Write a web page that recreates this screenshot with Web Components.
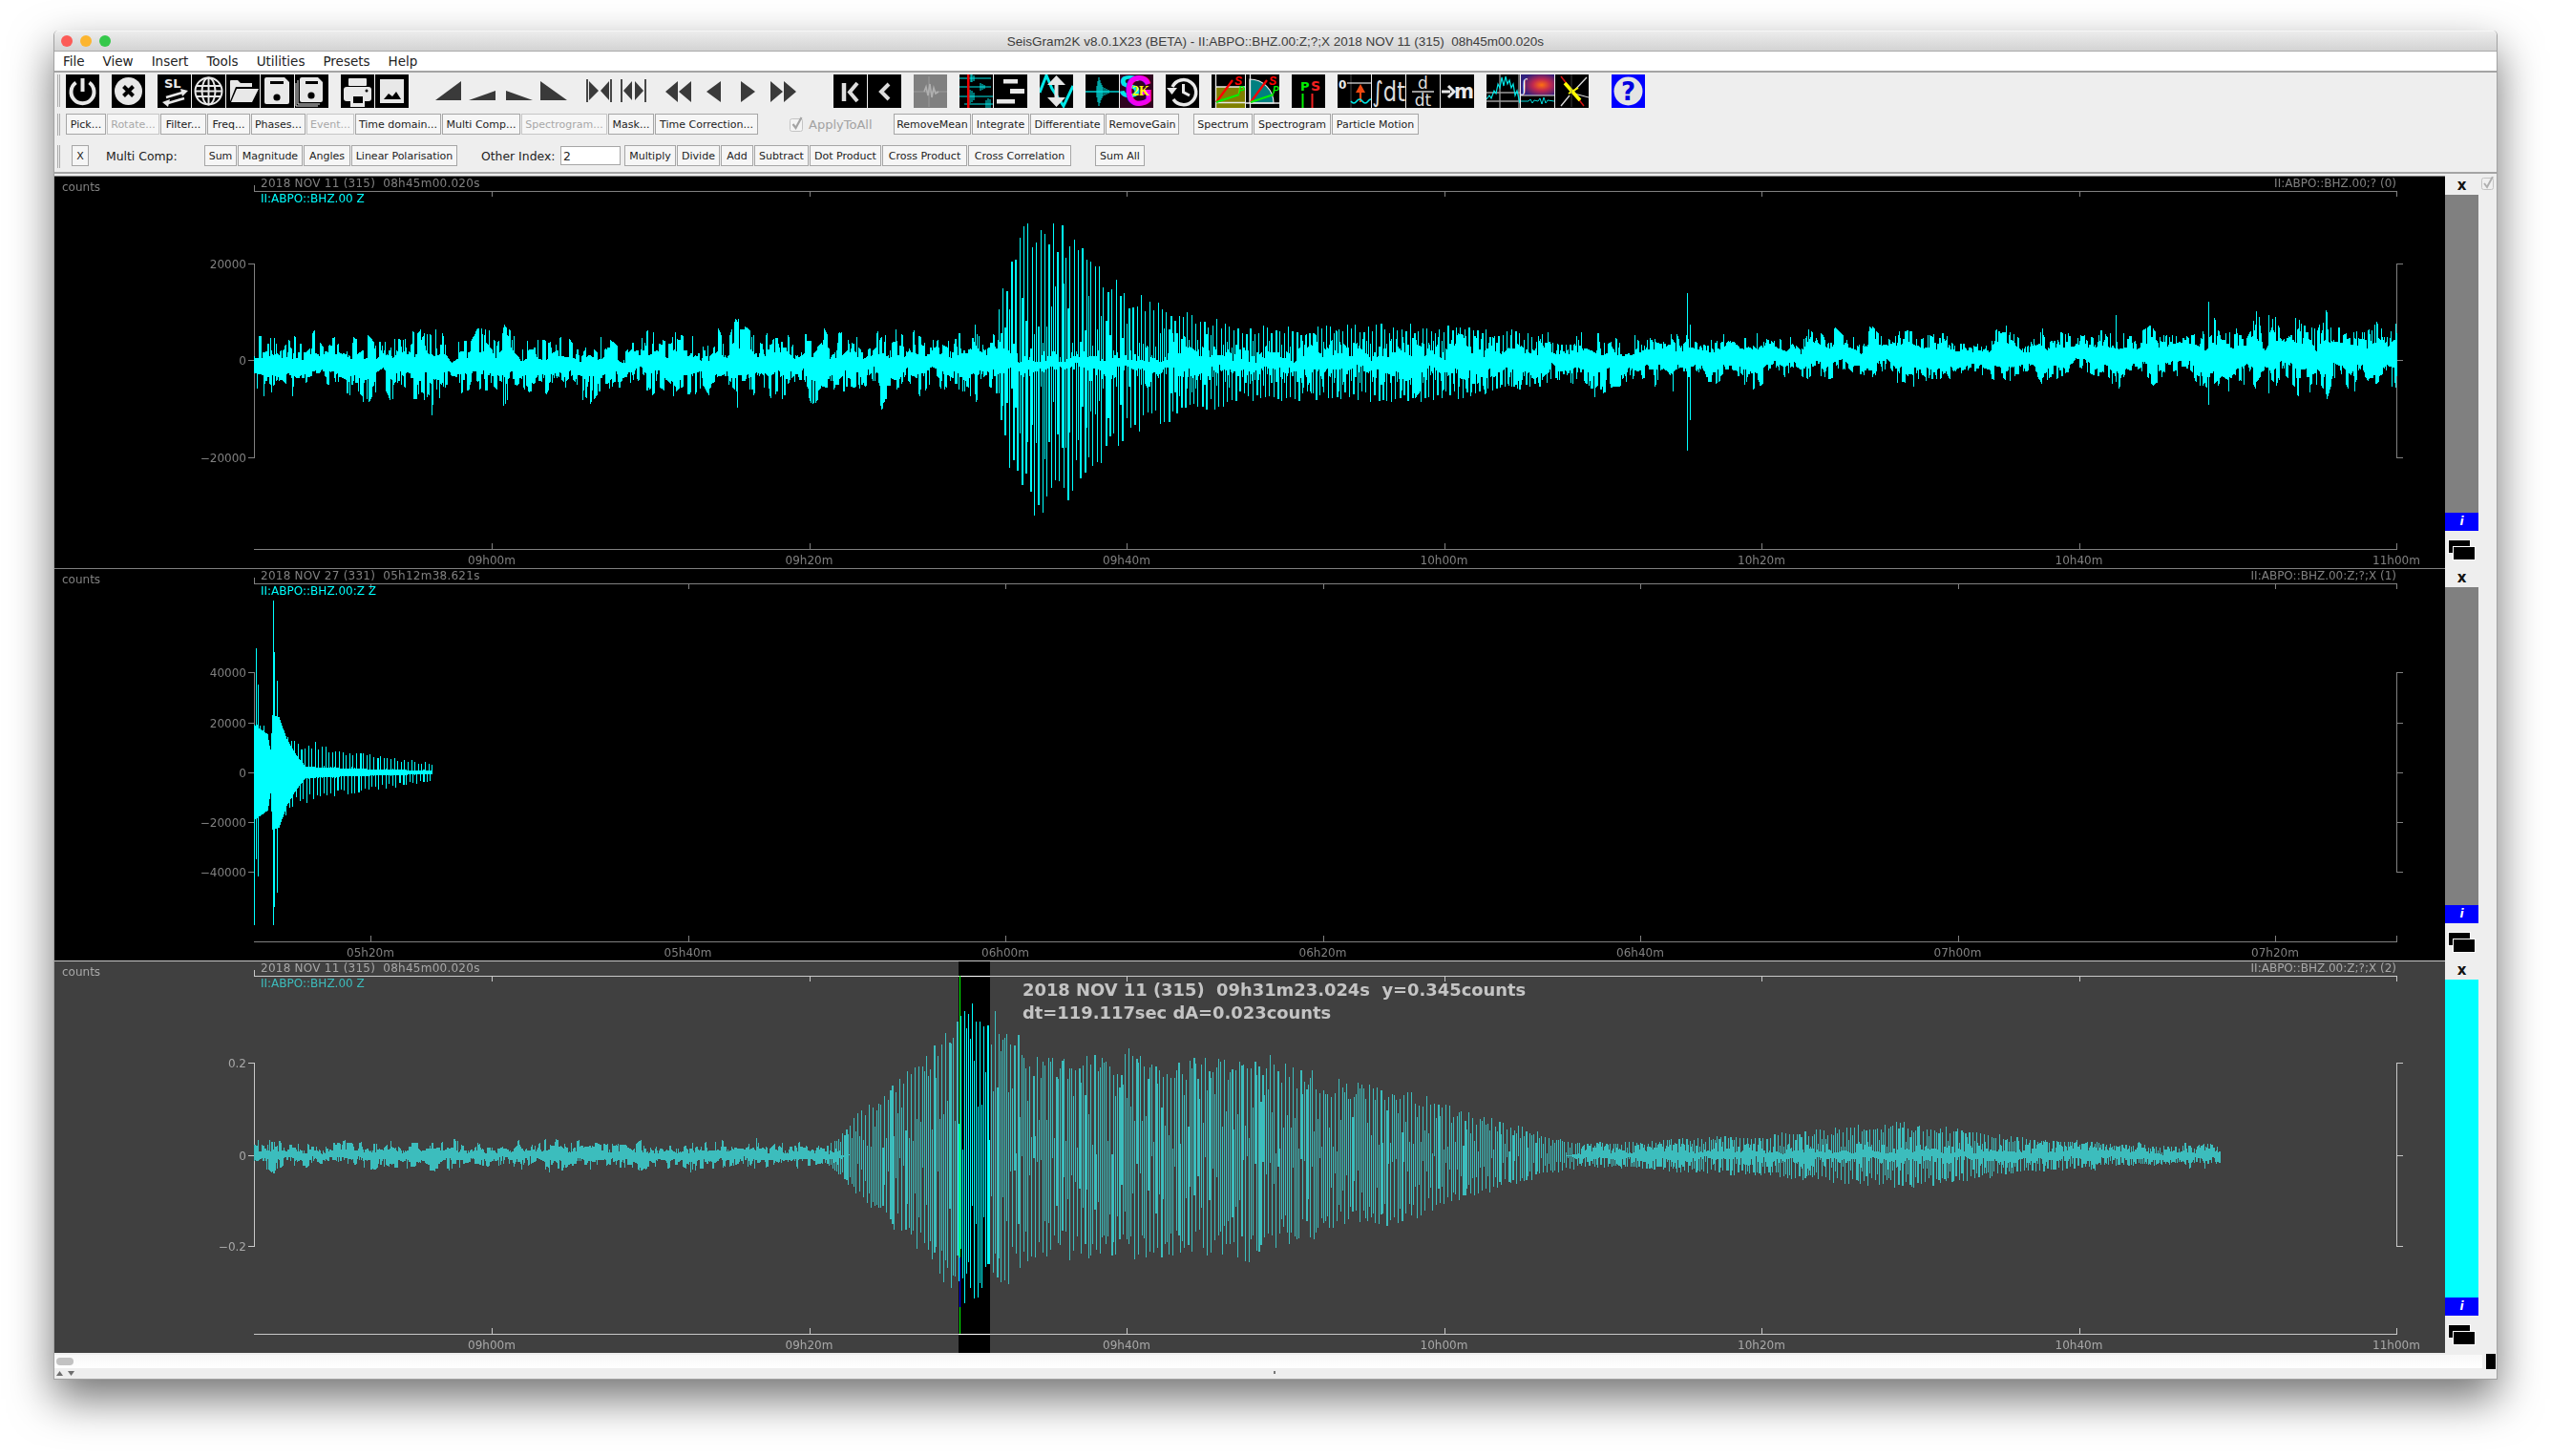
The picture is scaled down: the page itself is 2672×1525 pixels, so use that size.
<!DOCTYPE html>
<html>
<head>
<meta charset="utf-8">
<title>SeisGram2K</title>
<style>
html, body { margin: 0; height: 100%; background: #fff; overflow: hidden; }
body { font-family: "DejaVu Sans", sans-serif; }
sg-window { margin: 32px 0 0 56px; }
</style>
</head>
<body>
<sg-window>
  <sg-titlebar>SeisGram2K v8.0.1X23 (BETA) - II:ABPO::BHZ.00:Z;?;X 2018 NOV 11 (315)  08h45m00.020s</sg-titlebar>
  <sg-menubar><span>File</span><span>View</span><span>Insert</span><span>Tools</span><span>Utilities</span><span>Presets</span><span>Help</span></sg-menubar>

  <sg-row style="height:40px;padding-top:2px">
    <sg-icon name="power" ml="4"></sg-icon>
    <sg-icon name="close" ml="12"></sg-icon>
    <sg-icon name="sl" ml="12"></sg-icon>
    <sg-icon name="globe"></sg-icon>
    <sg-icon name="folder"></sg-icon>
    <sg-icon name="disk"></sg-icon>
    <sg-icon name="disks"></sg-icon>
    <sg-icon name="print" ml="12"></sg-icon>
    <sg-icon name="image"></sg-icon>
    <sg-icon name="tri1" w="28" clear ml="27"></sg-icon>
    <sg-icon name="tri2" w="28" clear ml="6"></sg-icon>
    <sg-icon name="tri3" w="28" clear ml="10"></sg-icon>
    <sg-icon name="tri4" w="28" clear ml="7"></sg-icon>
    <sg-icon name="skipin" w="27" clear ml="19"></sg-icon>
    <sg-icon name="skipout" w="27" clear ml="8"></sg-icon>
    <sg-icon name="dleft" w="27" clear ml="19"></sg-icon>
    <sg-icon name="left" w="15" clear ml="15"></sg-icon>
    <sg-icon name="right" w="15" clear ml="20"></sg-icon>
    <sg-icon name="dright" w="27" clear ml="15"></sg-icon>
    <sg-icon name="first" ml="38"></sg-icon>
    <sg-icon name="prev"></sg-icon>
    <sg-icon name="ghost" ml="12"></sg-icon>
    <sg-icon name="multi" ml="12"></sg-icon>
    <sg-icon name="sort"></sg-icon>
    <sg-icon name="flip" ml="12"></sg-icon>
    <sg-icon name="spike" ml="12"></sg-icon>
    <sg-icon name="sg2k"></sg-icon>
    <sg-icon name="clock" ml="12"></sg-icon>
    <sg-icon name="sp1" ml="12"></sg-icon>
    <sg-icon name="sp2"></sg-icon>
    <sg-icon name="ps" ml="12"></sg-icon>
    <sg-icon name="zero" ml="12"></sg-icon>
    <sg-icon name="intdt"></sg-icon>
    <sg-icon name="ddt"></sg-icon>
    <sg-icon name="tom"></sg-icon>
    <sg-icon name="trace" ml="12"></sg-icon>
    <sg-icon name="spectro"></sg-icon>
    <sg-icon name="motion"></sg-icon>
    <sg-icon name="help" ml="23"></sg-icon>
  </sg-row>

  <sg-row style="height:30px;padding-top:3px">
    <sg-btn w="42" ml="4">Pick...</sg-btn>
    <sg-btn w="55" disabled>Rotate...</sg-btn>
    <sg-btn w="48">Filter...</sg-btn>
    <sg-btn w="45">Freq...</sg-btn>
    <sg-btn w="57">Phases...</sg-btn>
    <sg-btn w="50" disabled>Event...</sg-btn>
    <sg-btn w="90">Time domain...</sg-btn>
    <sg-btn w="82">Multi Comp...</sg-btn>
    <sg-btn w="90" disabled>Spectrogram...</sg-btn>
    <sg-btn w="48">Mask...</sg-btn>
    <sg-btn w="108">Time Correction...</sg-btn>
    <sg-check></sg-check>
    <sg-btn w="81" ml="19">RemoveMean</sg-btn>
    <sg-btn w="60">Integrate</sg-btn>
    <sg-btn w="78">Differentiate</sg-btn>
    <sg-btn w="77">RemoveGain</sg-btn>
    <sg-btn w="62" ml="14">Spectrum</sg-btn>
    <sg-btn w="81">Spectrogram</sg-btn>
    <sg-btn w="91">Particle Motion</sg-btn>
  </sg-row>

  <sg-row style="height:34px;padding-top:6px">
    <sg-btn w="18" ml="10">X</sg-btn>
    <sg-label w="119" pad="17">Multi Comp:</sg-label>
    <sg-btn w="34">Sum</sg-btn>
    <sg-btn w="68">Magnitude</sg-btn>
    <sg-btn w="49">Angles</sg-btn>
    <sg-btn w="111">Linear Polarisation</sg-btn>
    <sg-label w="106" pad="24">Other Index:</sg-label>
    <sg-input value="2"></sg-input>
    <sg-btn w="54" ml="3">Multiply</sg-btn>
    <sg-btn w="45">Divide</sg-btn>
    <sg-btn w="34">Add</sg-btn>
    <sg-btn w="57">Subtract</sg-btn>
    <sg-btn w="75">Dot Product</sg-btn>
    <sg-btn w="89">Cross Product</sg-btn>
    <sg-btn w="108">Cross Correlation</sg-btn>
    <sg-btn w="52" ml="24">Sum All</sg-btn>
  </sg-row>
  <sg-rule></sg-rule>

  <sg-plots>
    <sg-plot trace="a" date="2018 NOV 11 (315)  08h45m00.020s" chan="II:ABPO::BHZ.00 Z" tag="II:ABPO::BHZ.00;? (0)"></sg-plot>
    <sg-plot trace="b" date="2018 NOV 27 (331)  05h12m38.621s" chan="II:ABPO::BHZ.00:Z Z" tag="II:ABPO::BHZ.00:Z;?;X (1)"></sg-plot>
    <sg-plot trace="c" date="2018 NOV 11 (315)  08h45m00.020s" chan="II:ABPO::BHZ.00 Z" tag="II:ABPO::BHZ.00:Z;?;X (2)"></sg-plot>
  </sg-plots>
  <sg-status></sg-status>
</sg-window>

<script>
// seeded so every run draws the same seismograms
function rng(seed) {
    return () => {
        seed = seed + 0x6D2B79F5 | 0
        let t = Math.imul(seed ^ seed >>> 15, 1 | seed)
        t = t + Math.imul(t ^ t >>> 7, 61 | t) ^ t
        return ((t ^ t >>> 14) >>> 0) / 4294967296
    }
}

function lerp(pts, x) {
    if (x <= pts[0][0]) return pts[0][1]
    for (let i = 1; i < pts.length; i++) {
        if (x <= pts[i][0]) {
            let f = (x - pts[i - 1][0]) / (pts[i][0] - pts[i - 1][0])
            return pts[i - 1][1] + f * (pts[i][1] - pts[i - 1][1])
        }
    }
    return pts[pts.length - 1][1]
}

const TIMES_A = ['09h00m', '09h20m', '09h40m', '10h00m', '10h20m', '10h40m', '11h00m']
const TIMES_B = ['05h20m', '05h40m', '06h00m', '06h20m', '06h40m', '07h00m', '07h20m']

const TRACES = {
    a: {
        top: 184, seed: 11, x0: 266, x1: 2510, period: 4.4, inner: .6, thick: .35, drift: 5, color: '#00ffff', side: '#808080',
        bg: '#000', fg: '#808080', textFg: '#808080', chanFg: '#00ffff',
        times: TIMES_A, tickStart: 515, yticks: [[92, '20000'], [193, '0'], [295, '\u221220000']],
        center: [[266, 383], [1500, 380], [1870, 374], [2510, 372]],
        noise: [[266, 38], [1000, 40], [1040, 30], [1100, 14], [1300, 26], [1500, 34], [1700, 38], [1780, 32], [2200, 32], [2320, 44], [2510, 44]],
        core: [[266, .24], [1760, .24], [1790, .36], [2510, .3]],
        amp: [[1035, 0], [1042, 35], [1050, 85], [1060, 120], [1080, 160], [1098, 172], [1130, 135], [1145, 115], [1180, 78], [1240, 58], [1300, 40], [1500, 42], [1600, 30], [1700, 0]],
        spikes: [[452, 375, 435], [1767, 307, 472], [1770, 340, 420], [2313, 316, 424], [2376, 330, 412], [1770, 340, 440], [2216, 330, 400]]
    },
    b: {
        top: 595, seed: 27, x0: 266, x1: 452, period: 3.6, inner: .25, thick: .1, drift: 0, color: '#00ffff', side: '#808080',
        bg: '#000', fg: '#808080', textFg: '#808080', chanFg: '#00ffff',
        times: TIMES_B, tickStart: 388, yticks: [[109, '40000'], [162, '20000'], [214, '0'], [266, '\u221220000'], [318, '\u221240000']],
        center: [[266, 809], [452, 809]],
        noise: [[266, 0]], core: [[266, 1]],
        amp: [[266, 52], [275, 55], [283, 30], [292, 62], [300, 50], [310, 32], [330, 32], [360, 24], [400, 18], [452, 10]],
        solid: [[266, 50], [280, 40], [283, 22], [285, 60], [292, 58], [300, 35], [310, 18], [320, 6], [340, 5], [400, 3], [452, 2]],
        spikes: [[266, 809, 969], [268, 679, 900], [270, 717, 918], [286, 629, 969], [287, 683, 950], [290, 713, 935]]
    },
    c: {
        top: 1006, seed: 315, x0: 266, x1: 2324, period: 4, inner: .95, thick: .15, drift: 2, color: '#3cbdbd', side: '#00ffff',
        bg: '#404040', fg: '#c8c8c8', textFg: '#a8a8a8', chanFg: '#3cbdbd',
        times: TIMES_A, tickStart: 515, yticks: [[107, '0.2'], [204, '0'], [299, '\u22120.2']],
        center: [[266, 1210], [2324, 1210]],
        noise: [[266, 17], [860, 17], [890, 0], [1640, 0], [1670, 14], [2324, 14]],
        core: [[266, .22]],
        amp: [[860, 6], [870, 14], [900, 47], [950, 92], [1000, 152], [1010, 170], [1037, 157], [1070, 122], [1085, 108], [1180, 113], [1260, 105], [1310, 113], [1345, 100], [1410, 78], [1465, 73], [1530, 48], [1600, 28], [1660, 12], [1700, 14], [1755, 18], [1875, 25], [1994, 36], [2130, 18], [2215, 12], [2324, 9]],
        spikes: [],
        band: [1004, 1037]
    }
}

window.customElements.define('sg-window', class extends HTMLElement {
    constructor() {
        super()
        this.attachShadow({ mode: 'open' }).innerHTML = `
        <style>
            :host {
                display: flex;
                flex-direction: column;
                box-sizing: border-box;
                width: 2560px;
                height: 1413px;
                background: #eeeeee;
                border: 1px solid #a2a2a2;
                border-top: 0;
                border-radius: 5px 5px 0 0;
                box-shadow: 0 20px 46px rgba(0,0,0,.55);
            }
        </style>
        <slot></slot>`
    }
})

window.customElements.define('sg-titlebar', class extends HTMLElement {
    constructor() {
        super()
        this.attachShadow({ mode: 'open' }).innerHTML = `
        <style>
            :host {
                display: flex;
                align-items: center;
                position: relative;
                box-sizing: border-box;
                height: 22px;
                justify-content: center;
                background: linear-gradient(#ececec, #d3d3d3);
                border-top: 1px solid #f6f6f6;
                border-bottom: 1px solid #aaaaaa;
                border-radius: 5px 5px 0 0;
                font: 13.5px "Liberation Sans", Arial, sans-serif;
                color: #3c3c3c;
                white-space: pre;
            }
            .lights { position: absolute; left: 7px; top: 4px; display: flex; gap: 8px; }
            .lights i { width: 12px; height: 12px; border-radius: 50%; }
        </style>
        <div class="lights">
            <i style="background:#fc5b57"></i><i style="background:#fcb52f"></i><i style="background:#34c84a"></i>
        </div>
        <slot></slot>`
    }
})

window.customElements.define('sg-menubar', class extends HTMLElement {
    constructor() {
        super()
        this.attachShadow({ mode: 'open' }).innerHTML = `
        <style>
            :host {
                display: flex;
                align-items: center;
                gap: 19px;
                box-sizing: border-box;
                height: 22px;
                padding-left: 9px;
                background: #fff;
                border-bottom: 2px solid #a4a4a4;
                font: 13.5px "DejaVu Sans", sans-serif;
                color: #222;
            }
        </style>
        <slot></slot>`
    }
})

window.customElements.define('sg-row', class extends HTMLElement {
    constructor() {
        super()
        this.attachShadow({ mode: 'open' }).innerHTML = `
        <style>
            :host {
                display: flex;
                align-items: flex-start;
                gap: 1px;
                box-sizing: border-box;
                padding-left: 3px;
                background: #eeeeee;
                flex: none;
            }
            .grip {
                width: 1px;
                height: calc(100% - 4px);
                margin-right: 1px;
                border-left: 1px solid #ababab;
                border-right: 1px solid #ababab;
            }
        </style>
        <div class="grip"></div>
        <slot></slot>`
    }
})

window.customElements.define('sg-rule', class extends HTMLElement {
    constructor() {
        super()
        this.attachShadow({ mode: 'open' }).innerHTML = `
        <style>
            :host { display: block; height: 4px; box-sizing: border-box; border-top: 2px solid #a4a4a4; background: #eee; }
        </style>`
    }
})

window.customElements.define('sg-btn', class extends HTMLElement {
    connectedCallback() {
        this.attachShadow({ mode: 'open' }).innerHTML = `
        <style>
            :host {
                display: flex;
                align-items: center;
                justify-content: center;
                flex: none;
                box-sizing: border-box;
                height: 22px;
                width: ${this.getAttribute('w')}px;
                margin-left: ${this.getAttribute('ml') || 0}px;
                background: #f6f6f6;
                border: 1px solid ${this.hasAttribute('disabled') ? '#c6c6c6' : '#a6a6a6'};
                font: 11px "DejaVu Sans", sans-serif;
                color: ${this.hasAttribute('disabled') ? '#a8a8a8' : '#222'};
                white-space: nowrap;
                overflow: hidden;
            }
        </style>
        <slot></slot>`
    }
})

window.customElements.define('sg-label', class extends HTMLElement {
    connectedCallback() {
        this.attachShadow({ mode: 'open' }).innerHTML = `
        <style>
            :host {
                display: flex;
                align-items: center;
                flex: none;
                box-sizing: border-box;
                height: 22px;
                width: ${this.getAttribute('w')}px;
                padding-left: ${this.getAttribute('pad') || 0}px;
                font: 12.4px "DejaVu Sans", sans-serif;
                color: #222;
                white-space: nowrap;
            }
        </style>
        <slot></slot>`
    }
})

window.customElements.define('sg-input', class extends HTMLElement {
    connectedCallback() {
        this.attachShadow({ mode: 'open' }).innerHTML = `
        <style>
            :host {
                display: flex;
                align-items: center;
                flex: none;
                box-sizing: border-box;
                height: 20px;
                width: 63px;
                margin-top: 1px;
                padding-left: 2px;
                background: #fff;
                border: 1px solid #a6a6a6;
                font: 12.4px "DejaVu Sans", sans-serif;
                color: #222;
            }
        </style>
        ${this.getAttribute('value')}`
    }
})

window.customElements.define('sg-check', class extends HTMLElement {
    constructor() {
        super()
        this.attachShadow({ mode: 'open' }).innerHTML = `
        <style>
            :host {
                display: flex;
                align-items: center;
                gap: 5px;
                flex: none;
                height: 22px;
                width: 89px;
                margin-left: 32px;
                font: 13px "DejaVu Sans", sans-serif;
                color: #a2a2a2;
                box-sizing: border-box;
                white-space: nowrap;
            }
            svg { flex: none; }
        </style>
        <svg width="15" height="17" viewBox="0 0 15 17">
            <rect x=".5" y="2.5" width="13" height="13" rx="2" fill="#f4f4f4" stroke="#c4c4c4"/>
            <path d="M3.5 8 L6.5 12 L12.5 1" fill="none" stroke="#a4a4a4" stroke-width="2.2"/>
        </svg>
        <span>ApplyToAll</span>`
    }
})

const E = '#e8e8e8'
const T = '#3a3a3a'
const ICONS = {
    power: `<path d="M10.5 8.5 A12 12 0 1 0 24.5 8.5" fill="none" stroke="${E}" stroke-width="4"/><path d="M17.5 4V18" stroke="${E}" stroke-width="4"/>`,
    close: `<circle cx="17.5" cy="17.5" r="14.5" fill="${E}"/><path d="M12.5 12.5L22.5 22.5M22.5 12.5L12.5 22.5" stroke="#000" stroke-width="4"/>`,
    sl: `<text x="7" y="14" font-family="DejaVu Sans" font-weight="bold" font-size="13" fill="${E}">SL</text>
         <path d="M9 24 L26 19" stroke="${E}" stroke-width="2.5"/><path d="M24 15 L32 17 L26 23Z" fill="${E}"/>
         <path d="M28 25 L11 30" stroke="${E}" stroke-width="2.5"/><path d="M13 26 L5 29 L11 34Z" fill="${E}"/>`,
    globe: `<g fill="none" stroke="${E}" stroke-width="2"><circle cx="17.5" cy="17.5" r="14"/><ellipse cx="17.5" cy="17.5" rx="7" ry="14"/><path d="M17.5 3.5V31.5M5 12H30M3.5 17.5H31.5M5 23H30"/></g>`,
    folder: `<path d="M4 28 V7 Q4 6 5 6 H12 L15 9 H27 V13 H10 Z" fill="${E}"/><path d="M11 15 H34 L27 29 H5 Z" fill="${E}"/>`,
    disk: `<path d="M6 3 H25 L30 8 V29 Q30 31 28 31 H6 Q4 31 4 29 V5 Q4 3 6 3Z" fill="${E}"/><rect x="10" y="7" width="14" height="3" fill="#000"/><circle cx="17" cy="24" r="3.6" fill="#000"/>`,
    disks: `<path d="M7 3 H24 L29 8 V27 Q29 29 27 29 H7 Q5 29 5 27 V5 Q5 3 7 3Z" fill="${E}"/><rect x="11" y="7" width="13" height="3" fill="#000"/><circle cx="17" cy="22" r="3.6" fill="#000"/>
            <path d="M3 6 V31 H26M1 9 V33 H24" fill="none" stroke="${E}" stroke-width="1"/>`,
    print: `<rect x="8" y="4" width="19" height="8" rx="1" fill="${E}"/><rect x="3" y="13" width="29" height="15" rx="3" fill="${E}"/><rect x="10" y="22" width="15" height="12" fill="${E}"/><rect x="13" y="23" width="10" height="7" fill="#000"/><circle cx="27" cy="17" r="1.5" fill="#000"/>`,
    image: `<rect x="5" y="5" width="25" height="25" fill="${E}"/><path d="M9 26 L14 20 L18 23 L22 18 L27 26Z" fill="#000"/>`,
    tri1: `<path d="M0 27 L27 7 V27Z" fill="${T}"/>`,
    tri2: `<path d="M0 27 L28 17 V27Z" fill="${T}"/>`,
    tri3: `<path d="M0 17 L28 27 H0Z" fill="${T}"/>`,
    tri4: `<path d="M0 7 L28 27 H0Z" fill="${T}"/>`,
    skipin: `<path d="M1 5V29M26 5V29" stroke="#111" stroke-width="1.5"/><path d="M3 7 L13 17 L3 27Z M24 7 L15 17 L24 27Z" fill="${T}"/>`,
    skipout: `<path d="M1 5V29M26 5V29" stroke="#111" stroke-width="1.5"/><path d="M12 7 L3 17 L12 27Z M15 7 L24 17 L15 27Z" fill="${T}"/>`,
    dleft: `<path d="M13 7 L0 18 L13 29Z M27 7 L14 18 L27 29Z" fill="${T}"/>`,
    left: `<path d="M15 7 L0 18 L15 29Z" fill="${T}"/>`,
    right: `<path d="M0 7 L15 18 L0 29Z" fill="${T}"/>`,
    dright: `<path d="M0 7 L13 18 L0 29Z M14 7 L27 18 L14 29Z" fill="${T}"/>`,
    first: `<path d="M11 9V28" stroke="#ddd" stroke-width="4.5"/><path d="M25 9 L17 18.5 L25 28" fill="none" stroke="#ddd" stroke-width="4"/>`,
    prev: `<path d="M22 10 L14 18 L22 26" fill="none" stroke="#ddd" stroke-width="4"/>`,
    ghost: `<rect width="35" height="35" fill="#808080"/><path d="M0 18H35M16 2V34" stroke="#9a9a9a" stroke-width="1"/><path d="M11 18 L13 13 L15 22 L17 10 L19 24 L21 14 L23 20 L26 18" fill="none" stroke="#b0b0b0" stroke-width="1.6"/>`,
    multi: `<g fill="none" stroke="#00e8e8"><path d="M0 4H33M0 13H33M0 23H35M5 31H35"/><path d="M12 0V8M13 0V8M15 1V7M22 9V17M24 10V16M26 11V15M11 16V30M13 17V29M15 19V27M30 25V35M32 26V35M28 27V35"/></g><rect x="8" width="2.5" height="35" fill="#f00000"/>`,
    sort: `<g fill="${E}"><rect x="10" y="5" width="15" height="4.5"/><rect x="17" y="15" width="15" height="5"/><rect x="3" y="26" width="19" height="4.5"/></g>`,
    flip: `<path d="M0 19 L7 1 L13 15 L25 33 L35 12" fill="none" stroke="#00e8e8" stroke-width="3"/><path d="M17.5 1 L27 11 H8Z M8 24 H27 L17.5 34Z" fill="#e4e4e4"/><rect x="15.5" y="11" width="4" height="13" fill="#e4e4e4"/>`,
    spike: `<path d="M0 18H35" stroke="#00d0d0" stroke-width="1.4"/><path d="M12 12V24M13 7V29M14 3V33M15 6V30M16 9V27M17 11V25M18 13V23M20 14V22M22 15V21M24 16V20" stroke="#00e0e0" stroke-width="1"/>`,
    sg2k: `<rect width="35" height="35" fill="#300420"/><text x="-1" y="24" font-family="Liberation Sans" font-weight="bold" font-size="34" fill="#00e8e8">S</text><text x="5" y="33" font-family="Liberation Sans" font-weight="bold" font-size="46" fill="#f000f0" textLength="30" lengthAdjust="spacingAndGlyphs">G</text><text x="13" y="22" font-family="Liberation Serif" font-weight="bold" font-size="14" fill="#ffff00">2K</text>`,
    clock: `<path d="M7 13 A13 13 0 1 1 8 26" fill="none" stroke="${E}" stroke-width="3.5"/><path d="M1 14 H12 L6.5 21Z" fill="${E}"/><path d="M18.5 10V18.5L25 22" fill="none" stroke="${E}" stroke-width="3"/>`,
    sp1: `<rect x="4" y="13" width="31" height="22" fill="#808000"/><path d="M4.5 0V35M4 13H35M4 29.5H35" stroke="#e8e8e8" stroke-width="1.3" fill="none"/><path d="M5 29 L22 6" stroke="#f00" stroke-width="2.2"/><path d="M5 29 L29 21" stroke="#00f000" stroke-width="2.2"/><text x="24" y="11" font-family="Liberation Sans" font-style="italic" font-weight="bold" font-size="12" fill="#f00">S</text><text x="28" y="20" font-family="Liberation Sans" font-style="italic" font-weight="bold" font-size="10" fill="#00f000">P</text>`,
    sp2: `<path d="M4 5 A25 25 0 0 1 29 30 H4Z" fill="#008080" stroke="#e8e8e8" stroke-width="1.2"/><path d="M4.5 0V35M0 30H35" stroke="#e8e8e8" stroke-width="1.3" fill="none"/><path d="M5 29 L22 6" stroke="#f00" stroke-width="2.2"/><path d="M5 29 L29 21" stroke="#00f000" stroke-width="2.2"/><text x="24" y="11" font-family="Liberation Sans" font-style="italic" font-weight="bold" font-size="12" fill="#f00">S</text><text x="28" y="20" font-family="Liberation Sans" font-style="italic" font-weight="bold" font-size="10" fill="#00f000">P</text>`,
    ps: `<text x="9" y="17" font-family="DejaVu Sans" font-weight="bold" font-size="13" fill="#00f000">P</text><text x="20" y="17" font-family="DejaVu Sans" font-weight="bold" font-size="14" fill="#f02020">S</text><rect x="10.5" y="20" width="2" height="15" fill="#00f000"/><rect x="20.5" y="20" width="2" height="15" fill="#f02020"/>`,
    zero: `<text x="1" y="15" font-family="DejaVu Sans" font-weight="bold" font-size="12" fill="${E}">0</text><path d="M14 0V35" stroke="#777" stroke-width=".6"/><path d="M10 9H35" stroke="${E}" stroke-width="1.2"/><path d="M24 29V17" stroke="#f04810" stroke-width="2.2"/><path d="M19 19 L24 10 L29 19Z" fill="#f04810"/><path d="M14 28 Q17 32 20 28 T26 28 T32 28 T36 28" fill="none" stroke="#00e8e8" stroke-width="1.5"/>`,
    intdt: `<text x="0" y="28" font-family="DejaVu Sans" font-size="29" fill="#ddd" textLength="35" lengthAdjust="spacingAndGlyphs">\u222Bdt</text>`,
    ddt: `<text x="17.5" y="15" text-anchor="middle" font-family="DejaVu Sans" font-size="17" fill="#ddd">d</text><path d="M6 18H29" stroke="#ddd" stroke-width="1.4"/><text x="17.5" y="33" text-anchor="middle" font-family="DejaVu Sans" font-size="17" fill="#ddd">dt</text>`,
    tom: `<path d="M1 18H10" stroke="${E}" stroke-width="3"/><path d="M8 12 L14 18 L8 24" fill="none" stroke="${E}" stroke-width="3"/><text x="14" y="25" font-family="DejaVu Sans" font-weight="bold" font-size="21" fill="${E}" textLength="21" lengthAdjust="spacingAndGlyphs">m</text>`,
    trace: `<path d="M0 19H35M0 28H35M14 0V35M34 0V35" stroke="#9a9a9a" stroke-width="1.3"/><path d="M0 26 L3 22 L5 25 L8 17 L10 20 L12 10 L14 14 L16 3 L18 12 L20 2 L22 10 L24 6 L26 14 L28 10 L30 22 L32 17 L35 30" fill="none" stroke="#00e8e8" stroke-width="1.2"/>`,
    spectro: `<defs><radialGradient id="h" cx=".62" cy=".5" r=".6"><stop offset="0" stop-color="#ff7010"/><stop offset=".45" stop-color="#c02850"/><stop offset="1" stop-color="#30207c"/></radialGradient></defs><rect width="35" height="22" fill="url(#h)"/><path d="M0 22H35" stroke="#e0e0e0" stroke-width="1.2"/><path d="M0 28H8L10 26L12 30L14 27L18 28L20 25L22 31L24 24L26 30L28 27L35 28" fill="none" stroke="#00d8d8" stroke-width="1"/><text x="1" y="17" font-family="Liberation Serif" font-style="italic" font-size="18" fill="#fff">\u222B</text>`,
    motion: `<path d="M33 3 L18 19 M15 22 L6 33" stroke="#d8d8d8" stroke-width="1.4"/><path d="M20 20L35 24" stroke="#e8e8e8" stroke-width="1"/><path d="M6 2 L30 33" stroke="#d81010" stroke-width="1.5"/><path d="M10 9 L26 27" stroke="#ffff00" stroke-width="3.6"/><path d="M14 20L24 14" stroke="#ffff00" stroke-width="2"/><path d="M17 0V34" stroke="#666" stroke-width=".6"/>`,
    help: `<rect width="35" height="35" fill="#0000ff"/><circle cx="17.5" cy="17.5" r="15" fill="#e4e4e4"/><text x="17.5" y="27" text-anchor="middle" font-family="DejaVu Sans" font-weight="bold" font-size="26" fill="#0000e0">?</text>`
}

window.customElements.define('sg-icon', class extends HTMLElement {
    connectedCallback() {
        let w = this.getAttribute('w') || 35
        this.attachShadow({ mode: 'open' }).innerHTML = `
        <style>
            :host {
                display: block;
                flex: none;
                width: ${w}px;
                height: 35px;
                margin-left: ${this.getAttribute('ml') || 0}px;
                background: ${this.hasAttribute('clear') ? 'transparent' : '#000'};
            }
            svg { display: block; }
        </style>
        <svg width="${w}" height="35" viewBox="0 0 ${w} 35">${ICONS[this.getAttribute('name')]}</svg>`
    }
})

window.customElements.define('sg-plots', class extends HTMLElement {
    constructor() {
        super()
        this.attachShadow({ mode: 'open' }).innerHTML = `
        <style>
            :host { display: block; position: relative; flex: none; width: 2558px; height: 1233px; }
            .tick { position: absolute; left: 2542px; top: 1px; }
        </style>
        <slot></slot>
        <svg class="tick" width="15" height="15" viewBox="0 0 15 15">
            <rect x=".5" y="1.5" width="12" height="12" rx="2" fill="#f0f0f0" stroke="#c4c4c4"/>
            <path d="M3 7 L6 11 L12 0" fill="none" stroke="#b0b0b0" stroke-width="2"/>
        </svg>`
    }
})

window.customElements.define('sg-plot', class extends HTMLElement {
    connectedCallback() {
        let t = TRACES[this.getAttribute('trace')]
        let X0 = 57
        let at = (cls, x, y, txt, extra) => `<span class="${cls}" style="left:${x}px;top:${y - 7}px;${extra || ''}">${txt}</span>`
        let labels = at('txt', 8, 12, 'counts', `color:${t.textFg}`)
            + at('txt wide', 216, 8, this.getAttribute('date'), `color:${t.textFg}`)
            + at('txt', 216, 24, this.getAttribute('chan'), `color:${t.chanFg}`)
            + at('txt end', 2153, 8, this.getAttribute('tag'), `color:${t.textFg}`)
        t.yticks.forEach(y => { labels += at('txt end', 101, y[0] + 1, y[1], `color:${t.textFg};width:100px`) })
        t.times.forEach((s, i) => {
            labels += at('txt mid', t.tickStart + i * 332.5 - X0 - 40, 403, s, `color:${t.textFg}`)
        })
        if (t.band) {
            labels += at('pick', 1071 - X0, 31, '2018 NOV 11 (315)  09h31m23.024s  y=0.345counts')
            labels += at('pick', 1071 - X0, 55, 'dt=119.117sec dA=0.023counts')
        }
        let shadow = this.attachShadow({ mode: 'open' })
        shadow.innerHTML = `
        <style>
            :host { display: flex; height: 411px; }
            .view { position: relative; width: 2504px; height: 411px; background: ${t.bg}; overflow: hidden; }
            canvas { display: block; }
            .txt { position: absolute; font: 12px/14px "DejaVu Sans", sans-serif; white-space: pre; }
            .wide { letter-spacing: .25px; }
            .end { width: 300px; text-align: right; }
            .mid { width: 80px; text-align: center; }
            .pick { position: absolute; font: bold 17.9px/14px "DejaVu Sans", sans-serif; color: #c4c4c4; white-space: pre; }
            .side { display: flex; flex-direction: column; width: 35px; }
            .x { height: 20px; text-align: center; font: bold 15px/20px "DejaVu Sans", sans-serif; color: #111; }
            .bar { height: 333px; background: ${t.side}; }
            .info { height: 19px; background: #0000ff; color: #fff; text-align: center; font: italic bold 12px/19px "DejaVu Sans", sans-serif; }
            .stack { position: relative; height: 39px; }
            .stack i { position: absolute; box-sizing: border-box; width: 24px; height: 15px; background: #000; border: 1px solid #fff; }
        </style>
        <div class="view"><canvas width="2504" height="411"></canvas>${labels}</div>
        <div class="side">
            <div class="x">x</div>
            <div class="bar"></div>
            <div class="info">i</div>
            <div class="stack"><i style="left:3px;top:9px"></i><i style="left:8px;top:16px"></i></div>
        </div>`
        this.draw(shadow.querySelector('canvas').getContext('2d'), t, X0)
    }

    draw(ctx, t, X0) {
        let r = rng(t.seed)
        let W = 2504
        let line = (x, y1, y2, w) => {
            let inBand = t.band && x >= t.band[0] && x < t.band[1]
            ctx.fillStyle = inBand ? '#00ffff' : t.color
            let a = Math.round(y1), b = Math.round(y2)
            ctx.fillRect(x - X0, a, w || 1, Math.max(1, b - a))
        }
        ctx.fillStyle = t.bg
        ctx.fillRect(0, 0, W, 411)
        if (t.band) {
            ctx.fillStyle = '#000'
            ctx.fillRect(t.band[0] - X0, 0, t.band[1] - t.band[0], 411)
        }

        // axes
        let AL = 266 - X0, AR = 2510 - X0, TOP = 16, BOT = 391
        let first = t.yticks[0][0], last = t.yticks[t.yticks.length - 1][0]
        ctx.fillStyle = t.fg
        ctx.fillRect(0, 0, W, 1)
        ctx.fillRect(AL, TOP, AR - AL + 1, 1)
        ctx.fillRect(AL, BOT, AR - AL + 1, 1)
        ctx.fillRect(AL, TOP - 6, 1, 6)
        ctx.fillRect(AR, TOP, 1, 6)
        ctx.fillRect(AR, BOT - 6, 1, 6)
        ctx.fillRect(AL, first, 1, last - first + 1)
        ctx.fillRect(AR, first, 1, last - first + 1)
        t.yticks.forEach(y => {
            ctx.fillRect(AL - 6, y[0], 6, 1)
            ctx.fillRect(AR, y[0], 7, 1)
        })
        t.times.forEach((s, i) => {
            let x = Math.round(t.tickStart + i * 332.5) - X0
            ctx.fillRect(x, TOP, 1, 6)
            ctx.fillRect(x, BOT - 6, 1, 6)
        })
        if (t.band) {
            ctx.fillStyle = '#ffffff'
            ctx.fillRect(t.band[0] - X0, TOP, t.band[1] - t.band[0], 1)
            ctx.fillRect(t.band[0] - X0, BOT, t.band[1] - t.band[0], 1)
            ctx.fillStyle = '#00ff00'
            ctx.fillRect(t.band[0] + 1 - X0, TOP, 1, BOT - TOP)
        }

        // slow wobble of the noise level and of the band's middle
        let wob = [], off = []
        for (let i = 0; i < 260; i++) {
            wob.push(.5 + .72 * r())
            off.push((r() - .5) * 2)
        }

        let lastK = -1, up = 0, dn = 0
        for (let x = t.x0; x <= t.x1; x++) {
            let c = lerp(t.center, x) - t.top
            let n = lerp(t.noise, x)
            if (n > 0) {
                let u = (x - t.x0) / 9, i = Math.floor(u), f = u - i
                let m = wob[i] * (1 - f) + wob[i + 1] * f
                let o = (off[i] * (1 - f) + off[i + 1] * f) * t.drift
                let core = lerp(t.core, x)
                // columns stick together a little, which gives the edge its comb look
                if (r() < .55) up = Math.pow(r(), 1.7)
                if (r() < .55) dn = Math.pow(r(), 1.7)
                line(x, c + o - n * m * (core + (1 - core) * up), c + o + n * m * (core + (1 - core) * dn))
            }
            if (t.solid) {
                let s = lerp(t.solid, x)
                line(x, c - s, c + s)
            }
            let A = lerp(t.amp, x)
            let k = Math.floor(x / (t.period / 2))
            if (k != lastK && A > 0) {
                lastK = k
                let j = .72 + .28 * r()
                let w = r() < t.thick ? 2 : 1
                if (k % 2) line(x, c - A * j, c + A * t.inner * r(), w)
                else line(x, c - A * t.inner * r(), c + A * j, w)
            }
        }
        t.spikes.forEach(s => line(s[0], s[1] - t.top, s[2] - t.top))

        if (t.band) {
            ctx.fillStyle = '#0000ff'
            ctx.fillRect(t.band[0] + 1 - X0, 311, 1, 52)
        }
    }
})

window.customElements.define('sg-status', class extends HTMLElement {
    constructor() {
        super()
        this.attachShadow({ mode: 'open' }).innerHTML = `
        <style>
            :host { display: block; flex: none; height: 27px; background: #eeeeee; }
            .strip { display: flex; height: 16px; gap: 4px; }
            .track { flex: 1; box-sizing: border-box; margin-top: 2px; height: 14px; background: linear-gradient(#f8f8f8, #fff); display: flex; align-items: center; padding-left: 2px; }
            .thumb { width: 18px; height: 8px; border-radius: 4px; background: #c2c2c2; }
            .end { width: 10px; height: 16px; margin: 1px 1px 0 0; background: #000; }
            .low { display: flex; height: 11px; align-items: center; padding-left: 2px; position: relative; gap: 5px; }
            .low svg { display: block; }
            .mark { position: absolute; left: 1277px; top: 3px; width: 2px; height: 3px; background: #777; }
        </style>
        <div class="strip"><div class="track"><div class="thumb"></div></div><div class="end"></div></div>
        <div class="low">
            <svg width="7" height="5" viewBox="0 0 7 5"><path d="M3.5 0 L7 5 H0Z" fill="#6e6e6e"/></svg>
            <svg width="7" height="5" viewBox="0 0 7 5"><path d="M0 0 H7 L3.5 5Z" fill="#6e6e6e"/></svg>
            <div class="mark"></div>
        </div>`
    }
})
</script>
</body>
</html>
